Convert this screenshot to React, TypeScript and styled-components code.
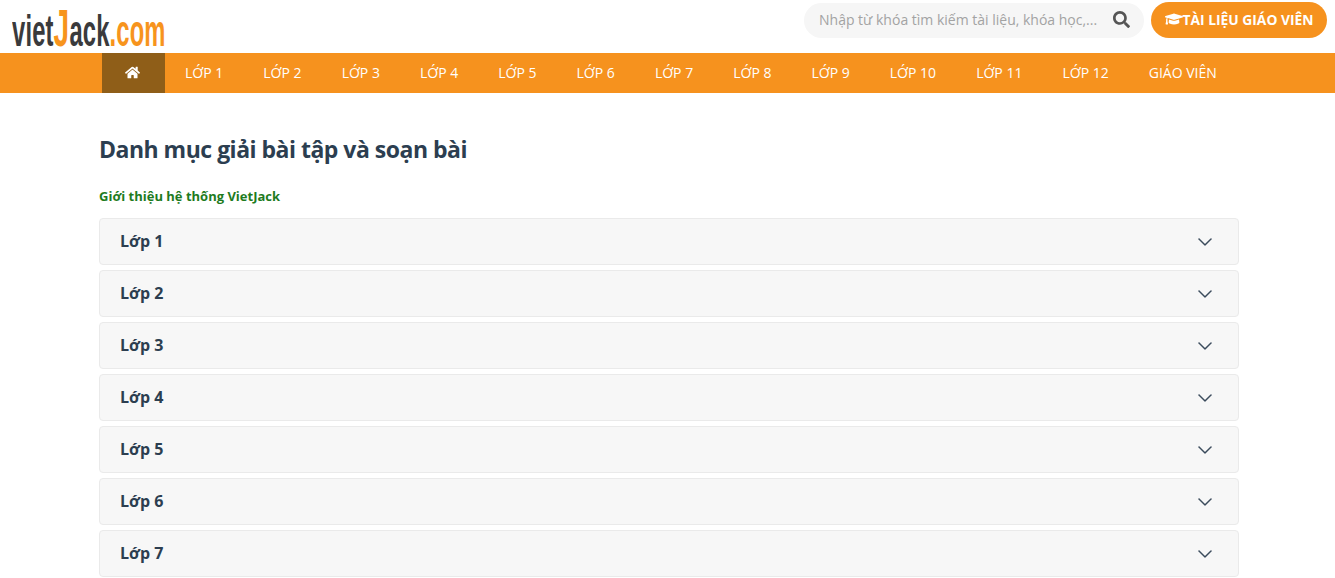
import { FaGraduationCap, FaHome, FaSearch } from 'react-icons/fa';
import styled, { createGlobalStyle } from 'styled-components';

const GRADES = [1, 2, 3, 4, 5, 6, 7, 8, 9, 10, 11, 12];
const SECTIONS = [1, 2, 3, 4, 5, 6, 7];

const GlobalStyle = createGlobalStyle`
	html, body {
		margin: 0;
		background: #fff;
		font-family: 'Open Sans', 'Noto Sans', sans-serif;
		color: #2c3e50;
	}
`;

const Header = styled.header`
	height: 53px;
	display: flex;
	align-items: center;
	justify-content: space-between;
	padding: 0 8px 0 12px;
	box-sizing: border-box;
`;

const Logo = styled.a`
	display: block;
	width: 153px;
	height: 53px;
	font-family: 'Liberation Sans', sans-serif;
	font-weight: 700;
	font-size: 44px;
	line-height: 53px;
	letter-spacing: 0.3px;
	white-space: nowrap;
	color: #3a3a3c;
`;

const LogoInner = styled.span`
	display: inline-block;
	transform: scaleX(0.54);
	transform-origin: 0 50%;
	margin-top: 4px;
`;

const LogoAccent = styled.span<{ $big?: boolean }>`
	color: #f7941d;
	font-size: ${(p) => (p.$big ? '52px' : '44px')};
	line-height: 30px;
`;

const HeaderRight = styled.div`
	display: flex;
	align-items: center;
	gap: 7px;
	margin-top: -14px;
`;

const Search = styled.div`
	width: 340px;
	height: 35px;
	margin-top: 1px;
	box-sizing: border-box;
	padding: 0 14px 2px 15px;
	display: flex;
	align-items: center;
	justify-content: space-between;
	background: #f6f6f6;
	border-radius: 18px;
	font-size: 14px;
	color: #a3a3a3;
	svg {
		color: #555;
		font-size: 17px;
	}
`;

const TeacherButton = styled.a`
	width: 176px;
	height: 36px;
	padding-bottom: 1px;
	box-sizing: border-box;
	display: flex;
	align-items: center;
	justify-content: center;
	background: #f6921e;
	border-radius: 18px;
	color: #fff;
	font-size: 13.8px;
	font-weight: 700;
	white-space: nowrap;
	svg {
		font-size: 18px;
	}
`;

const Nav = styled.nav`
	height: 40px;
	background: #f6921e;
	display: flex;
	padding-left: 102px;
`;

const NavItem = styled.a<{ $home?: boolean }>`
	display: flex;
	align-items: center;
	justify-content: center;
	padding: ${(p) => (p.$home ? '0 23px 2px 20px' : '0 20px 2px')};
	width: ${(p) => (p.$home ? '63px' : 'auto')};
	box-sizing: border-box;
	background: ${(p) => (p.$home ? '#8f5e18' : 'transparent')};
	color: #fff;
	font-size: 14px;
	white-space: nowrap;
`;

const Main = styled.main`
	margin: 0 96px 0 99px;
`;

const Title = styled.h1`
	margin: 38px 0 0;
	font-size: 23px;
	line-height: 36px;
	font-weight: 700;
	letter-spacing: -0.5px;
	color: #2c3e50;
`;

const Intro = styled.a`
	display: block;
	margin: 19px 0 12px;
	font-size: 13px;
	line-height: 20px;
	font-weight: 700;
	color: #1e7b1e;
`;

const List = styled.div`
	display: flex;
	flex-direction: column;
	gap: 5px;
`;

const Item = styled.div`
	height: 47px;
	box-sizing: border-box;
	display: flex;
	align-items: center;
	justify-content: space-between;
	padding: 0 25px 2px 20px;
	background: #f7f7f7;
	border: 1px solid #eaeaea;
	border-radius: 4px;
	font-size: 16px;
	font-weight: 700;
	color: #2c3e50;
	svg {
		margin-top: 2px;
	}
`;

const Chevron = () => (
	<svg width="16" height="16" viewBox="0 0 16 16" fill="#2c3e50" stroke="#2c3e50" strokeWidth="0.5">
		<path
			fillRule="evenodd"
			d="M1.646 4.646a.5.5 0 0 1 .708 0L8 10.293l5.646-5.647a.5.5 0 0 1 .708.708l-6 6a.5.5 0 0 1-.708 0l-6-6a.5.5 0 0 1 0-.708z"
		/>
	</svg>
);

const App = () => (
	<>
		<GlobalStyle />
		<Header>
			<Logo>
				<LogoInner>
					viet<LogoAccent $big>J</LogoAccent>ack<LogoAccent>.com</LogoAccent>
				</LogoInner>
			</Logo>
			<HeaderRight>
				<Search>
					<span>Nhập từ khóa tìm kiếm tài liệu, khóa học,...</span>
					<FaSearch />
				</Search>
				<TeacherButton>
					<FaGraduationCap />
					TÀI LIỆU GIÁO VIÊN
				</TeacherButton>
			</HeaderRight>
		</Header>
		<Nav>
			<NavItem $home>
				<FaHome size={15} />
			</NavItem>
			{GRADES.map((grade) => (
				<NavItem key={grade}>LỚP {grade}</NavItem>
			))}
			<NavItem>GIÁO VIÊN</NavItem>
		</Nav>
		<Main>
			<Title>Danh mục giải bài tập và soạn bài</Title>
			<Intro>Giới thiệu hệ thống VietJack</Intro>
			<List>
				{SECTIONS.map((section) => (
					<Item key={section}>
						Lớp {section}
						<Chevron />
					</Item>
				))}
			</List>
		</Main>
	</>
);

export default App;
